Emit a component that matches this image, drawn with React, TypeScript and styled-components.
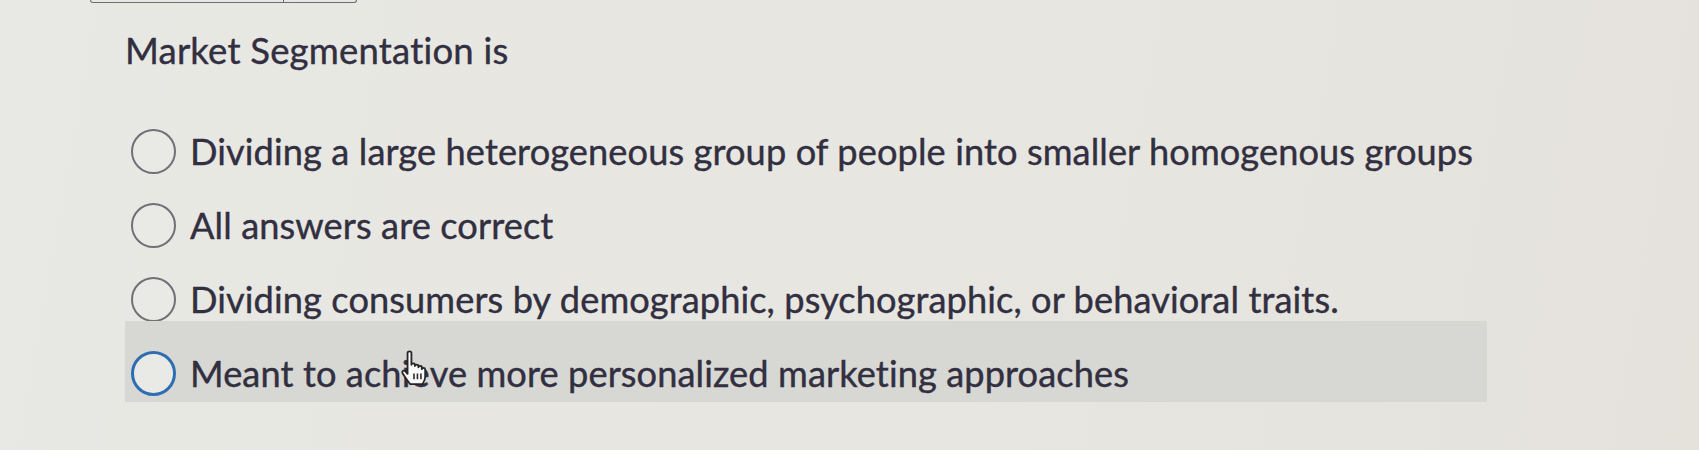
import React from 'react';
import styled, { createGlobalStyle } from 'styled-components';

const GlobalStyle = createGlobalStyle`
  html, body {
    margin: 0;
    padding: 0;
  }
  body {
    width: 1699px;
    height: 450px;
    overflow: hidden;
    background: linear-gradient(100deg, #e8e8e4 0%, #e7e6e1 55%, #e4e2db 100%);
    font-family: Lato, "Open Sans", "Liberation Sans", sans-serif;
    color: #312f40;
  }
`;

const Page = styled.div`
  width: 1699px;
  height: 450px;
  display: flex;
  flex-direction: column;
`;

// bottom edge of the button group cut off at the top of the photo
const TopButtons = styled.div`
  display: flex;
  margin-left: 90px;
  width: 265px;
  height: 2px;
  border: 1.5px solid #6e6d74;
  border-top: none;
  border-radius: 0 0 4px 4px;
`;

const TopButton = styled.div<{ $grow?: boolean }>`
  flex: ${(p) => (p.$grow ? '1' : '0 0 72px')};
  & + & {
    border-left: 1.5px solid #6e6d74;
  }
`;

const Question = styled.div`
  margin: 25px 0 0 125px;
  font-size: 36.5px;
  line-height: 44px;
  letter-spacing: 0.2px;
  -webkit-text-stroke: 0.4px #312f40;
`;

const Answers = styled.div`
  display: flex;
  flex-direction: column;
  margin: 31px 0 0 125px;
  width: 1362px;
`;

const Answer = styled.label<{ $hover?: boolean }>`
  display: flex;
  align-items: center;
  gap: 14px;
  height: 74px;
  box-sizing: border-box;
  padding: 22px 0 0 6px;
  background: transparent;
  ${(p) =>
    p.$hover &&
    `
    margin-top: -4px;
    height: 81px;
    padding-top: 23px;
    background: #d7d7d3;
  `}
`;

const Radio = styled.span<{ $focus?: boolean }>`
  flex: 0 0 auto;
  width: 45px;
  height: 45px;
  box-sizing: border-box;
  border-radius: 50%;
  border: ${(p) => (p.$focus ? '3.5px solid #2f6db3' : '2.5px solid #717076')};
  background: #e9e9e6;
`;

const AnswerText = styled.span`
  font-size: 36.2px;
  line-height: 42px;
  letter-spacing: 0.1px;
  white-space: nowrap;
  -webkit-text-stroke: 0.4px #312f40;
`;

// the spot of text that the mouse pointer lies over
const PointerSpot = styled.span`
  position: relative;
`;

const Cursor = styled.svg`
  position: absolute;
  left: -4px;
  top: -1px;
  width: 33px;
  height: 36px;
`;

const HandCursor = () => (
  <Cursor viewBox="0 0 24 28">
    <path
      d="M6.6 2.2c0-1.5 3-1.5 3 0v9.3c0-1.4 2.7-1.4 2.7 0v1c0-1.4 2.7-1.4 2.7 0v1c0-1.4 2.7-1.4 2.7 0v1.4c0-1.4 2.6-1.4 2.6 0v6c0 2.3-.9 3.9-2 5.6H8.6c-1.5-2-3.9-5-5.9-8.4-.8-1.5.9-2.8 2.1-1.6l1.8 2.1z"
      fill="#fafaf8"
      stroke="#26252b"
      strokeWidth="1.4"
      strokeLinejoin="round"
    />
    <path d="M11.6 18.2v4.6M14.3 18.2v4.6M17 18.2v4.6" stroke="#26252b" strokeWidth="1.2" />
  </Cursor>
);

export default function App() {
  return (
    <Page>
      <GlobalStyle />
      <TopButtons>
        <TopButton $grow />
        <TopButton />
      </TopButtons>
      <Question>Market Segmentation is</Question>
      <Answers>
        <Answer>
          <Radio />
          <AnswerText>Dividing a large heterogeneous group of people into smaller homogenous groups</AnswerText>
        </Answer>
        <Answer>
          <Radio />
          <AnswerText>All answers are correct</AnswerText>
        </Answer>
        <Answer>
          <Radio />
          <AnswerText>Dividing consumers by demographic, psychographic, or behavioral traits.</AnswerText>
        </Answer>
        <Answer $hover>
          <Radio $focus />
          <AnswerText>
            Meant to ach
            <PointerSpot>
              ie
              <HandCursor />
            </PointerSpot>
            ve more personalized marketing approaches
          </AnswerText>
        </Answer>
      </Answers>
    </Page>
  );
}
